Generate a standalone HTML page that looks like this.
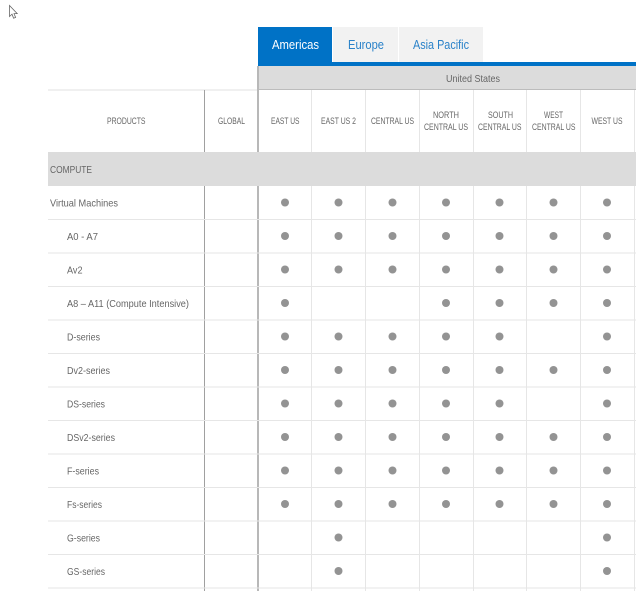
<!DOCTYPE html>
<html lang="en">
<head>
<meta charset="utf-8">
<title>Azure regions</title>
<style>
html,body{margin:0;padding:0;background:#fff;width:636px;height:591px;overflow:hidden}
svg{display:block;position:absolute;left:0;top:0;filter:blur(0.3px)}
text{font-family:"Liberation Sans",sans-serif;fill:#666}
.h{font-size:9px;text-anchor:start;fill:#666}
.r{font-size:10.5px}
.t{font-size:13px;fill:#2a82c9}
circle{fill:#939393}
.l{fill:#e6e6e6}
.d{fill:#a0a0a0}
</style>
</head>
<body>
<svg width="636" height="591" viewBox="0 0 636 591" xmlns="http://www.w3.org/2000/svg">
<!-- cursor -->
<path d="M9.5 5.5V16.5L12 14.2L13.6 18.2L15.6 17.4L14 13.6H17.2Z" fill="#fff" stroke="#666" stroke-width="0.8"/>

<!-- tabs -->
<rect x="258" y="27" width="74" height="36" fill="#0072c6"/>
<rect x="333" y="27" width="65" height="35" fill="#f2f2f2"/>
<rect x="399" y="27" width="84" height="35" fill="#f2f2f2"/>
<rect x="258" y="62" width="378" height="4" fill="#0072c6"/>
<rect x="258" y="66" width="378" height="23" fill="#dcdcdc"/>
<rect x="258" y="89" width="378" height="1" fill="#bcbcbc"/>
<rect x="48" y="89" width="210" height="2" fill="#f0f0f0"/>

<!-- vertical lines -->
<rect class="d" x="204" y="90" width="1" height="501"/>
<rect x="257" y="66" width="2" height="525" fill="#b8b8b8"/>
<rect class="l" x="311" y="90" width="1" height="501"/>
<rect class="l" x="365" y="90" width="1" height="501"/>
<rect class="l" x="419" y="90" width="1" height="501"/>
<rect class="l" x="473" y="90" width="1" height="501"/>
<rect class="l" x="526" y="90" width="1" height="501"/>
<rect class="l" x="580" y="90" width="1" height="501"/>
<rect class="l" x="634" y="90" width="1" height="501"/>

<!-- compute band -->
<rect x="48" y="152" width="588" height="34" fill="#dcdcdc"/>

<!-- row lines -->
<rect class="l" x="48" y="219" width="588" height="1"/>
<rect class="l" x="48" y="252.5" width="588" height="1"/>
<rect class="l" x="48" y="286" width="588" height="1"/>
<rect class="l" x="48" y="319.5" width="588" height="1"/>
<rect class="l" x="48" y="353" width="588" height="1"/>
<rect class="l" x="48" y="386.5" width="588" height="1"/>
<rect class="l" x="48" y="420" width="588" height="1"/>
<rect class="l" x="48" y="453.5" width="588" height="1"/>
<rect class="l" x="48" y="487" width="588" height="1"/>
<rect class="l" x="48" y="520.5" width="588" height="1"/>
<rect class="l" x="48" y="554" width="588" height="1"/>
<rect class="l" x="48" y="587.5" width="588" height="1"/>

<!-- tab labels -->
<text x="272" y="49" font-size="13" style="fill:#fff" textLength="47" lengthAdjust="spacingAndGlyphs">Americas</text>
<text class="t" x="348" y="49" textLength="36" lengthAdjust="spacingAndGlyphs">Europe</text>
<text class="t" x="413" y="49" textLength="56" lengthAdjust="spacingAndGlyphs">Asia Pacific</text>
<text x="446" y="82" font-size="10.5" textLength="54" lengthAdjust="spacingAndGlyphs">United States</text>

<!-- header labels -->
<text class="h" x="107" y="124" textLength="38.5" lengthAdjust="spacingAndGlyphs">PRODUCTS</text>
<text class="h" x="218" y="124" textLength="27" lengthAdjust="spacingAndGlyphs">GLOBAL</text>
<text class="h" x="271" y="124" textLength="28.5" lengthAdjust="spacingAndGlyphs">EAST US</text>
<text class="h" x="321" y="124" textLength="35" lengthAdjust="spacingAndGlyphs">EAST US 2</text>
<text class="h" x="371" y="124" textLength="43" lengthAdjust="spacingAndGlyphs">CENTRAL US</text>
<text class="h" x="433" y="118" textLength="26" lengthAdjust="spacingAndGlyphs">NORTH</text>
<text class="h" x="424" y="130" textLength="44" lengthAdjust="spacingAndGlyphs">CENTRAL US</text>
<text class="h" x="488" y="118" textLength="25" lengthAdjust="spacingAndGlyphs">SOUTH</text>
<text class="h" x="478" y="130" textLength="43.5" lengthAdjust="spacingAndGlyphs">CENTRAL US</text>
<text class="h" x="544" y="118" textLength="19" lengthAdjust="spacingAndGlyphs">WEST</text>
<text class="h" x="532" y="130" textLength="43.5" lengthAdjust="spacingAndGlyphs">CENTRAL US</text>
<text class="h" x="591.5" y="124" textLength="31" lengthAdjust="spacingAndGlyphs">WEST US</text>

<!-- row labels -->
<text class="r" x="50" y="173" textLength="42" lengthAdjust="spacingAndGlyphs">COMPUTE</text>
<text class="r" x="50" y="206.5" textLength="68" lengthAdjust="spacingAndGlyphs">Virtual Machines</text>
<text class="r" x="67" y="240" textLength="31" lengthAdjust="spacingAndGlyphs">A0 - A7</text>
<text class="r" x="67" y="273.5" textLength="15.5" lengthAdjust="spacingAndGlyphs">Av2</text>
<text class="r" x="67" y="307" textLength="122" lengthAdjust="spacingAndGlyphs">A8 – A11 (Compute Intensive)</text>
<text class="r" x="67" y="340.5" textLength="33" lengthAdjust="spacingAndGlyphs">D-series</text>
<text class="r" x="67" y="374" textLength="43" lengthAdjust="spacingAndGlyphs">Dv2-series</text>
<text class="r" x="67" y="407.5" textLength="38" lengthAdjust="spacingAndGlyphs">DS-series</text>
<text class="r" x="67" y="441" textLength="48" lengthAdjust="spacingAndGlyphs">DSv2-series</text>
<text class="r" x="67" y="474.5" textLength="32" lengthAdjust="spacingAndGlyphs">F-series</text>
<text class="r" x="67" y="508" textLength="35" lengthAdjust="spacingAndGlyphs">Fs-series</text>
<text class="r" x="67" y="541.5" textLength="33" lengthAdjust="spacingAndGlyphs">G-series</text>
<text class="r" x="67" y="575" textLength="38" lengthAdjust="spacingAndGlyphs">GS-series</text>

<!-- dots -->
<g>
<circle cx="285" cy="202.5" r="4"/><circle cx="338.5" cy="202.5" r="4"/><circle cx="392.5" cy="202.5" r="4"/><circle cx="446" cy="202.5" r="4"/><circle cx="499.5" cy="202.5" r="4"/><circle cx="553.5" cy="202.5" r="4"/><circle cx="607" cy="202.5" r="4"/>
<circle cx="285" cy="236" r="4"/><circle cx="338.5" cy="236" r="4"/><circle cx="392.5" cy="236" r="4"/><circle cx="446" cy="236" r="4"/><circle cx="499.5" cy="236" r="4"/><circle cx="553.5" cy="236" r="4"/><circle cx="607" cy="236" r="4"/>
<circle cx="285" cy="269.5" r="4"/><circle cx="338.5" cy="269.5" r="4"/><circle cx="392.5" cy="269.5" r="4"/><circle cx="446" cy="269.5" r="4"/><circle cx="499.5" cy="269.5" r="4"/><circle cx="553.5" cy="269.5" r="4"/><circle cx="607" cy="269.5" r="4"/>
<circle cx="285" cy="303" r="4"/><circle cx="446" cy="303" r="4"/><circle cx="499.5" cy="303" r="4"/><circle cx="553.5" cy="303" r="4"/><circle cx="607" cy="303" r="4"/>
<circle cx="285" cy="336.5" r="4"/><circle cx="338.5" cy="336.5" r="4"/><circle cx="392.5" cy="336.5" r="4"/><circle cx="446" cy="336.5" r="4"/><circle cx="499.5" cy="336.5" r="4"/><circle cx="607" cy="336.5" r="4"/>
<circle cx="285" cy="370" r="4"/><circle cx="338.5" cy="370" r="4"/><circle cx="392.5" cy="370" r="4"/><circle cx="446" cy="370" r="4"/><circle cx="499.5" cy="370" r="4"/><circle cx="553.5" cy="370" r="4"/><circle cx="607" cy="370" r="4"/>
<circle cx="285" cy="403.5" r="4"/><circle cx="338.5" cy="403.5" r="4"/><circle cx="392.5" cy="403.5" r="4"/><circle cx="446" cy="403.5" r="4"/><circle cx="499.5" cy="403.5" r="4"/><circle cx="607" cy="403.5" r="4"/>
<circle cx="285" cy="437" r="4"/><circle cx="338.5" cy="437" r="4"/><circle cx="392.5" cy="437" r="4"/><circle cx="446" cy="437" r="4"/><circle cx="499.5" cy="437" r="4"/><circle cx="553.5" cy="437" r="4"/><circle cx="607" cy="437" r="4"/>
<circle cx="285" cy="470.5" r="4"/><circle cx="338.5" cy="470.5" r="4"/><circle cx="392.5" cy="470.5" r="4"/><circle cx="446" cy="470.5" r="4"/><circle cx="499.5" cy="470.5" r="4"/><circle cx="553.5" cy="470.5" r="4"/><circle cx="607" cy="470.5" r="4"/>
<circle cx="285" cy="504" r="4"/><circle cx="338.5" cy="504" r="4"/><circle cx="392.5" cy="504" r="4"/><circle cx="446" cy="504" r="4"/><circle cx="499.5" cy="504" r="4"/><circle cx="553.5" cy="504" r="4"/><circle cx="607" cy="504" r="4"/>
<circle cx="338.5" cy="537.5" r="4"/><circle cx="607" cy="537.5" r="4"/>
<circle cx="338.5" cy="571" r="4"/><circle cx="607" cy="571" r="4"/>
</g>
</svg>
</body>
</html>
